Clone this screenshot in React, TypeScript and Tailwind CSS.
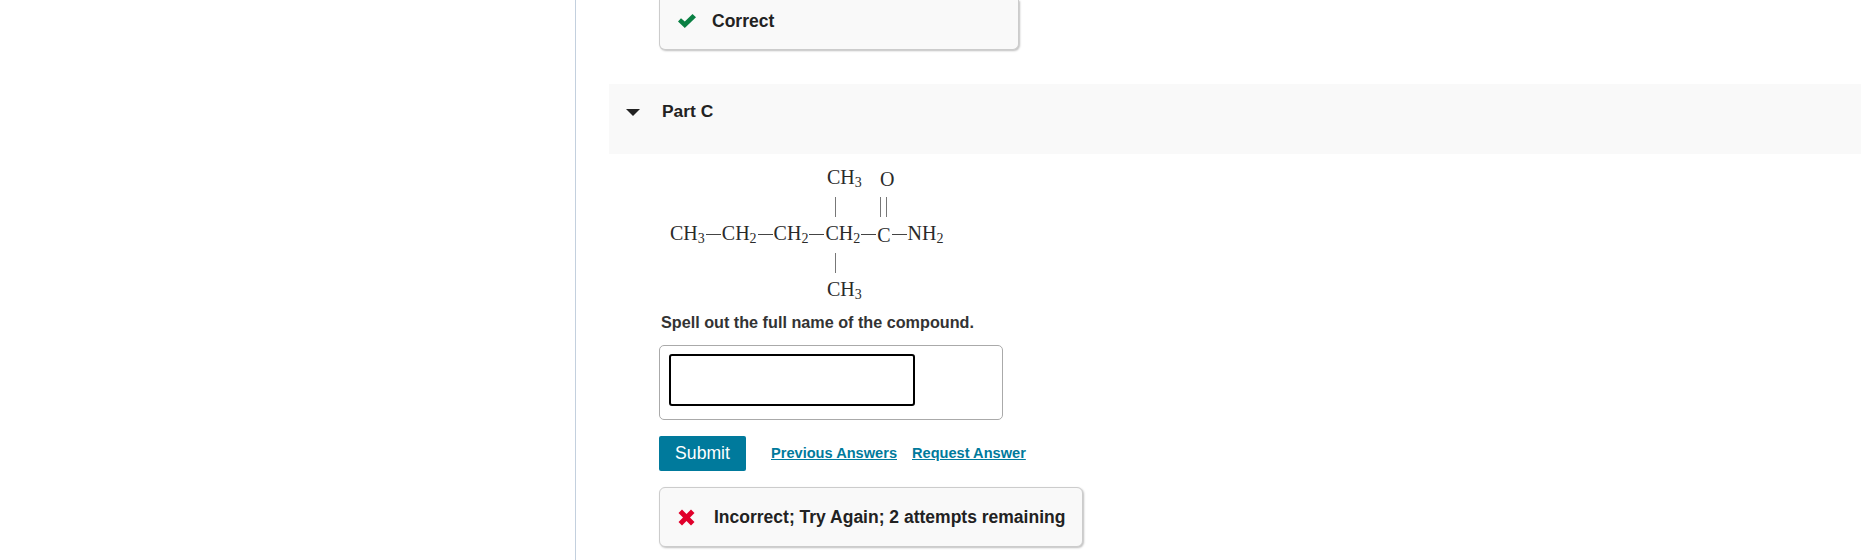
import { Fragment } from "react";

const sans = "font-['Liberation_Sans',Arial,sans-serif]";

function Chem({ base, sub }: { base: string; sub?: string }) {
  return (
    <span>
      {base}
      {sub && <span className="text-[14px] leading-none align-[-3px]">{sub}</span>}
    </span>
  );
}

function Formula() {
  const bond = <span className="inline-block w-[15px] h-px bg-[#444] mx-px" />;
  return (
    <div className="font-['Liberation_Serif',serif] text-[20px] leading-none text-[#2a2a2a] ml-[11px] mt-[10px] w-[290px]">
      <div className="h-[29px] flex items-center">
        <div className="ml-[157px] w-[53px]"><Chem base="CH" sub="3" /></div>
        <div>O</div>
      </div>
      <div className="h-[27px] flex items-center">
        <div className="ml-[165px] w-px h-[20px] bg-[#777]" />
        <div className="ml-[44px] w-px h-[20px] bg-[#777]" />
        <div className="ml-[5px] w-px h-[20px] bg-[#777]" />
      </div>
      <div className="h-[29px] flex items-center whitespace-nowrap">
        {["CH3", "CH2", "CH2", "CH2"].map((g, i) => (
          <Fragment key={i}>
            <Chem base={g.slice(0, 2)} sub={g.slice(2)} />
            {bond}
          </Fragment>
        ))}
        <span>C</span>
        {bond}
        <Chem base="NH" sub="2" />
      </div>
      <div className="h-[27px] flex items-center">
        <div className="ml-[165px] w-px h-[20px] bg-[#777]" />
      </div>
      <div className="h-[29px] flex items-center">
        <div className="ml-[157px]"><Chem base="CH" sub="3" /></div>
      </div>
    </div>
  );
}

function FeedbackBox({ kind, text }: { kind: "ok" | "bad"; text: string }) {
  return (
    <div
      className={
        kind === "ok"
          ? "w-[360px] h-[50px] pl-[18px] flex items-center gap-[16px] pb-[7px] bg-[#f9f9f9] border border-t-0 border-[#ccc] rounded-b-[6px] shadow-[1px_1px_2px_rgba(0,0,0,0.25)]"
          : "w-[424px] h-[60px] pl-[18px] mt-[16px] flex items-center gap-[19px] bg-[#f9f9f9] border border-[#ccc] rounded-[6px] shadow-[1px_1px_2px_rgba(0,0,0,0.25)]"
      }
    >
      {kind === "ok" ? (
        <svg width="18" height="14" viewBox="0 0 18 14">
          <path d="M0 7.5 L3 4.2 L6.8 7.6 L14.5 0 L18 3.3 L6.8 14 Z" fill="#0a8043" />
        </svg>
      ) : (
        <svg width="17" height="17" viewBox="0 0 17 17">
          <path d="M0.5 4 L4 0.5 L8.5 5 L13 0.5 L16.5 4 L12 8.5 L16.5 13 L13 16.5 L8.5 12 L4 16.5 L0.5 13 L5 8.5 Z" fill="#e0002b" />
        </svg>
      )}
      <span className="text-[17.5px] font-bold text-[#222] whitespace-nowrap">{text}</span>
    </div>
  );
}

export default function App() {
  return (
    <div className={`${sans} flex h-[560px] w-[1861px] overflow-hidden bg-white`}>
      <div className="w-[576px] shrink-0 border-r border-[#c3d0de]" />
      <div className="flex-1 pl-[33px]">
        <div className="pl-[50px]">
          <FeedbackBox kind="ok" text="Correct" />
        </div>
        <div className="mt-[34px] h-[70px] bg-[#f9f9f9] flex items-start pt-[18px] pl-[17px]">
          <svg width="14" height="18" viewBox="0 0 14 18" className="mt-px">
            <path d="M0 6 H14 L7 13 Z" fill="#222" />
          </svg>
          <span className="ml-[22px] text-[17.4px] leading-[19px] font-bold text-[#222]">Part C</span>
        </div>
        <div className="pl-[50px]">
          <Formula />
          <p className="mt-[8px] ml-[2px] text-[16.2px] leading-[18px] font-bold text-[#333]">
            Spell out the full name of the compound.
          </p>
          <div className="mt-[14px] w-[344px] h-[75px] border border-[#aaa] rounded-[5px] pl-[9px] pt-[8px]">
            <div className="w-[246px] h-[52px] border-2 border-black rounded-[3px]" />
          </div>
          <div className="mt-[16px] flex items-center">
            <button className="w-[87px] h-[35px] bg-[#007a9c] rounded-[2px] text-white text-[17.6px]">Submit</button>
            <a className="ml-[25px] text-[14.6px] font-bold text-[#007a9c] underline">Previous Answers</a>
            <a className="ml-[15px] text-[14.6px] font-bold text-[#007a9c] underline">Request Answer</a>
          </div>
          <FeedbackBox kind="bad" text="Incorrect; Try Again; 2 attempts remaining" />
        </div>
      </div>
    </div>
  );
}
